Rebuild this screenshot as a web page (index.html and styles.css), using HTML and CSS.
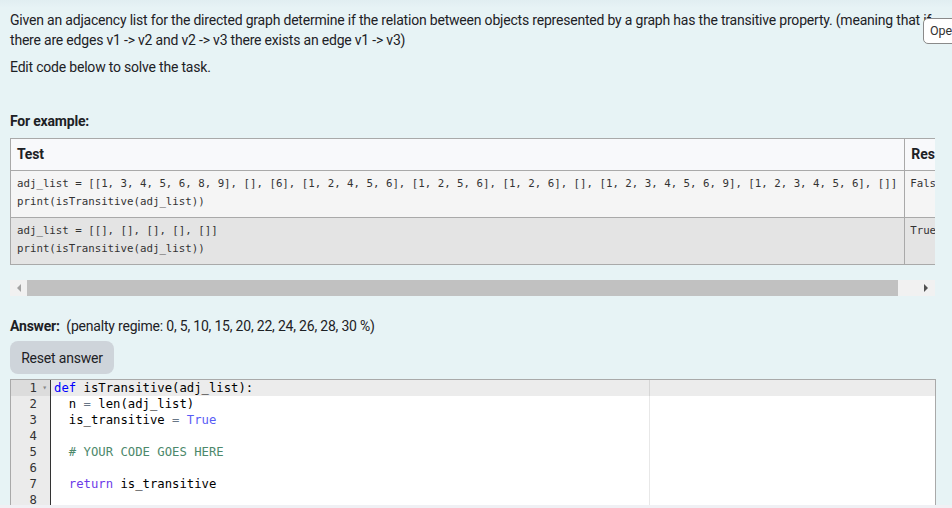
FILE: index.html
```html
<!DOCTYPE html>
<html lang="en">
<head>
<meta charset="utf-8">
<title>Question</title>
<link rel="stylesheet" href="styles.css">
</head>
<body>
<div class="page">
  <main class="content">
    <p class="desc">Given an adjacency list for the directed graph determine if the relation between objects represented by a graph has the transitive property. (meaning that if there are edges v1 -&gt; v2 and v2 -&gt; v3 there exists an edge v1 -&gt; v3)</p>
    <p class="desc">Edit code below to solve the task.</p>
    <h4 class="example-title">For example:</h4>
    <div class="table-wrap">
      <table class="examples">
        <thead>
          <tr><th class="col-test">Test</th><th class="col-res">Result</th></tr>
        </thead>
        <tbody>
          <tr class="odd"><td class="col-test"><pre>adj_list = [[1, 3, 4, 5, 6, 8, 9], [], [6], [1, 2, 4, 5, 6], [1, 2, 5, 6], [1, 2, 6], [], [1, 2, 3, 4, 5, 6, 9], [1, 2, 3, 4, 5, 6], []]
print(isTransitive(adj_list))</pre></td><td class="col-res"><pre>False</pre></td></tr>
          <tr class="even"><td class="col-test"><pre>adj_list = [[], [], [], [], []]
print(isTransitive(adj_list))</pre></td><td class="col-res"><pre>True</pre></td></tr>
        </tbody>
      </table>
    </div>
    <div class="hscroll">
      <div class="sb-btn sb-left"><span class="arr-left"></span></div>
      <div class="sb-thumb"></div>
      <div class="sb-btn sb-right"><span class="arr-right"></span></div>
    </div>
    <p class="answer"><b>Answer:</b>&nbsp; (penalty regime: 0, 5, 10, 15, 20, 22, 24, 26, 28, 30 %)</p>
    <button class="reset" type="button">Reset answer</button>
    <div class="editor">
      <div class="gutter">
        <div class="gl active">1<span class="fold">&#9662;</span></div>
        <div class="gl">2</div>
        <div class="gl">3</div>
        <div class="gl">4</div>
        <div class="gl">5</div>
        <div class="gl">6</div>
        <div class="gl">7</div>
        <div class="gl">8</div>
        <div class="gl">9</div>
      </div>
      <div class="code">
        <div class="print-margin"></div>
        <div class="ln active"><span class="kw">def</span> isTransitive(adj_list):</div>
        <div class="ln">  n <span class="op">=</span> len(adj_list)</div>
        <div class="ln">  is_transitive <span class="op">=</span> <span class="const">True</span></div>
        <div class="ln"> </div>
        <div class="ln">  <span class="cm"># YOUR CODE GOES HERE</span></div>
        <div class="ln"> </div>
        <div class="ln">  <span class="kw2">return</span> is_transitive</div>
        <div class="ln"> </div>
        <div class="ln"> </div>
      </div>
    </div>
  </main>
  <div class="footer-strip"></div>
  <div class="tooltip">Open</div>
</div>
</body>
</html>
```
FILE: styles.css
```css
html, body {
  margin: 0;
  padding: 0;
}
body {
  width: 952px;
  height: 508px;
  overflow: hidden;
  background: #e7f3f5;
  font-family: Roboto, "Liberation Sans", Arial, sans-serif;
  font-size: 14px;
  letter-spacing: -0.2px;
  color: #1d2125;
}
.page {
  position: relative;
  height: 508px;
  display: flex;
  flex-direction: column;
  background: linear-gradient(#e1eef1 0, #e7f3f5 8px);
}
.content {
  height: 505px;
  overflow: hidden;
  padding: 10px 17px 0 10px;
  box-sizing: border-box;
}
.desc {
  margin: 0 0 7px 0;
  line-height: 20px;
}
.example-title {
  margin: 34px 0 7px 0;
  font-size: 14px;
  font-weight: 700;
  line-height: 20px;
}
.table-wrap {
  width: 925px;
  overflow: hidden;
}
.examples {
  border-collapse: collapse;
  background: #fff;
}
.examples th, .examples td {
  border: 1px solid #a9a9a9;
  text-align: left;
  vertical-align: top;
}
.examples th {
  background: #f8f9fb;
  font-weight: 700;
  line-height: 20px;
  padding: 5px 8px 6px 6px;
}
.examples th.col-res {
  padding-left: 6px;
  letter-spacing: 0;
}
.examples td {
  padding: 4px 7px 6px 6px;
}
.examples td.col-res {
  padding-left: 5px;
  min-width: 45px;
}
.examples tr.odd td { background: #f5f5f5; }
.examples tr.even td { background: #e4e4e4; }
.examples pre {
  margin: 0;
  font-family: "DejaVu Sans Mono", monospace;
  font-size: 10.75px;
  letter-spacing: 0;
  line-height: 18px;
  color: #333;
  white-space: pre;
}
.hscroll {
  margin-top: 15px;
  width: 925px;
  height: 16px;
  display: flex;
  background: #f1f1f1;
}
.sb-btn {
  display: flex;
  align-items: center;
  justify-content: center;
  background: #f1f1f1;
}
.sb-left { width: 17px; }
.sb-right { flex: 1; justify-content: flex-end; padding-right: 7px; }
.sb-thumb {
  width: 871px;
  background: #c1c1c1;
}
.arr-left {
  width: 0; height: 0;
  border-top: 4px solid transparent;
  border-bottom: 4px solid transparent;
  border-right: 4px solid #a3a3a3;
}
.arr-right {
  width: 0; height: 0;
  border-top: 4px solid transparent;
  border-bottom: 4px solid transparent;
  border-left: 4px solid #505050;
}
.answer {
  margin: 20px 0 5px 0;
  line-height: 20px;
}
.reset {
  display: block;
  height: 33px;
  width: 104px;
  border: 0;
  border-radius: 8px;
  background: #ced4da;
  font-family: Roboto, "Liberation Sans", Arial, sans-serif;
  font-size: 14px;
  letter-spacing: -0.2px;
  color: #1d2125;
  padding: 0;
  margin: 0 0 5px 0;
}
.editor {
  width: 924px;
  border: 1px solid #a9a9a9;
  border-bottom: 0;
  display: flex;
  background: #fff;
  font-family: "DejaVu Sans Mono", monospace;
  font-size: 12.25px;
  letter-spacing: 0;
  line-height: 16px;
}
.gutter {
  width: 39px;
  background: #ebebeb;
  border-right: 1px solid #333;
  color: #333;
}
.gl {
  height: 16px;
  padding-right: 13px;
  text-align: right;
  position: relative;
}
.gl.active { background: #dcdcdc; }
.fold {
  position: absolute;
  right: 3px;
  top: 0;
  font-size: 8px;
  color: #888;
}
.code {
  flex: 1;
  position: relative;
  color: #000;
}
.print-margin {
  position: absolute;
  left: 598px;
  top: 0;
  bottom: 0;
  width: 1px;
  background: #e8e8e8;
}
.ln {
  height: 16px;
  padding-left: 3px;
  white-space: pre;
  position: relative;
}
.ln.active { background: rgba(0, 0, 0, 0.075); }
.kw { color: #0000ff; }
.kw2 { color: #6c3be8; }
.op { color: #687687; }
.const { color: #585cf6; }
.cm { color: #4c886b; }
.footer-strip {
  height: 3px;
  background: #f0f0f4;
}
.tooltip {
  position: absolute;
  left: 923px;
  top: 18px;
  height: 24px;
  padding: 0 8px 0 6px;
  background: #fff;
  border: 1px solid #8a8a8a;
  border-radius: 5px;
  font-size: 12.5px;
  letter-spacing: 0;
  line-height: 24px;
  color: #333;
  white-space: nowrap;
}
```
